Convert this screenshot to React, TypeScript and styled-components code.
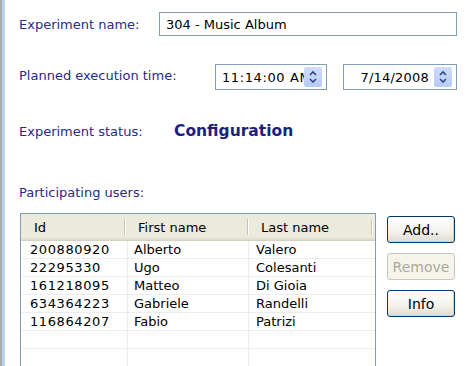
import styled, { createGlobalStyle } from 'styled-components';

const GlobalStyle = createGlobalStyle`
  html, body {
    margin: 0;
    padding: 0;
    background: #ffffff;
  }
  body {
    font-family: "DejaVu Sans", Verdana, sans-serif;
    font-size: 13px;
  }
`;

const Frame = styled.div`
  height: 366px;
  width: 474px;
  overflow: hidden;
  border-left: 2px solid #ababab;
  box-sizing: border-box;
`;

const Panel = styled.div`
  height: 100%;
  border-left: 3px solid #bcd1f0;
  padding-left: 14px;
  display: flex;
  flex-direction: column;
`;

const Row = styled.div<{ $top: number; $h: number }>`
  display: flex;
  align-items: center;
  margin-top: ${({ $top }) => $top}px;
  height: ${({ $h }) => $h}px;
`;

const Label = styled.div<{ $w?: number; $lift?: number }>`
  color: #262a8e;
  font-size: 13px;
  width: ${({ $w }) => ($w ? `${$w}px` : 'auto')};
  flex-shrink: 0;
  white-space: nowrap;
  margin-top: ${({ $lift }) => ($lift ? `-${$lift}px` : '0')};
`;

const Status = styled.div`
  color: #1d1f7e;
  font-size: 15.5px;
  font-weight: bold;
`;

const TextBox = styled.div<{ $w: number; $h: number }>`
  width: ${({ $w }) => $w}px;
  height: ${({ $h }) => $h}px;
  box-sizing: border-box;
  border: 1px solid #7f9db9;
  background: #fff;
  display: flex;
  align-items: center;
  padding: 0 4px 0 6px;
  color: #000;
  font-size: 13px;
  overflow: hidden;
  white-space: nowrap;
`;

const PickerText = styled.div<{ $right?: boolean }>`
  flex: 1;
  overflow: hidden;
  white-space: nowrap;
  letter-spacing: ${({ $right }) => ($right ? '0.2px' : '0.6px')};
  text-align: ${({ $right }) => ($right ? 'right' : 'left')};
  padding-right: ${({ $right }) => ($right ? '5px' : '0')};
`;

const Spin = styled.div`
  width: 18px;
  height: 20px;
  flex-shrink: 0;
  background: linear-gradient(#cfdcf8, #b7cbf5);
  border-radius: 2px;
  display: flex;
  align-items: center;
  justify-content: center;
`;

const Gap = styled.div<{ $w: number }>`
  width: ${({ $w }) => $w}px;
  flex-shrink: 0;
`;

const TableArea = styled.div`
  display: flex;
  margin-top: 13px;
  margin-left: 1px;
  gap: 11px;
`;

const Grid = styled.div`
  width: 356px;
  height: 160px;
  box-sizing: border-box;
  border: 1px solid #7f9db9;
  background: #fff;
  display: flex;
  flex-direction: column;
`;

const HeaderRow = styled.div`
  display: grid;
  grid-template-columns: 104px 123px 124px 1fr;
  height: 26px;
  background: #ebeadb;
  border-bottom: 1px solid #d6d2c2;
  box-shadow: inset 0 -2px 0 #e2dfd0;
  flex-shrink: 0;
`;

const HeadCell = styled.div<{ $sep?: boolean }>`
  display: flex;
  align-items: center;
  padding-left: 13px;
  color: #000;
  position: relative;
  &::after {
    content: '';
    display: ${({ $sep }) => ($sep ? 'block' : 'none')};
    position: absolute;
    right: 0;
    top: 5px;
    bottom: 5px;
    width: 1px;
    background: #c7c5b2;
    box-shadow: 1px 0 0 #fff;
  }
`;

const BodyRow = styled.div`
  display: grid;
  grid-template-columns: 107px 121px 1fr;
  height: 18px;
  border-bottom: 1px solid #ececec;
  box-sizing: border-box;
  flex-shrink: 0;
`;

const Cell = styled.div<{ $pad: number; $last?: boolean; $num?: boolean }>`
  display: flex;
  align-items: center;
  padding-left: ${({ $pad }) => $pad}px;
  border-right: ${({ $last }) => ($last ? 'none' : '1px solid #ececec')};
  color: #000;
  font-size: 13px;
  letter-spacing: ${({ $num }) => ($num ? '0.6px' : '0')};
  white-space: nowrap;
  overflow: hidden;
`;

const Buttons = styled.div`
  display: flex;
  flex-direction: column;
  gap: 10px;
  padding-top: 3px;
`;

const Button = styled.button<{ $disabled?: boolean }>`
  width: 68px;
  height: 27px;
  box-sizing: border-box;
  border-radius: 3px;
  font-family: "DejaVu Sans", Verdana, sans-serif;
  font-size: 14px;
  padding: 0;
  border: 1px solid ${({ $disabled }) => ($disabled ? '#cac8bb' : '#003c74')};
  color: ${({ $disabled }) => ($disabled ? '#aca899' : '#000')};
  background: ${({ $disabled }) =>
    $disabled ? '#f5f4ea' : 'linear-gradient(#ffffff 0%, #f3f2ec 60%, #dedbcf 100%)'};
  box-shadow: ${({ $disabled }) => ($disabled ? 'none' : 'inset -1px -1px 0 #d6d0c0')};
`;

const users = [
  { id: '200880920', first: 'Alberto', last: 'Valero' },
  { id: '22295330', first: 'Ugo', last: 'Colesanti' },
  { id: '161218095', first: 'Matteo', last: 'Di Gioia' },
  { id: '634364223', first: 'Gabriele', last: 'Randelli' },
  { id: '116864207', first: 'Fabio', last: 'Patrizi' },
  { id: '', first: '', last: '' },
  { id: '', first: '', last: '' },
];

const SpinIcon = () => (
  <svg width="10" height="14" viewBox="0 0 10 14">
    <path d="M2 5 L5 2 L8 5" fill="none" stroke="#2d4a8c" strokeWidth="1.6" />
    <path d="M2 9 L5 12 L8 9" fill="none" stroke="#2d4a8c" strokeWidth="1.6" />
  </svg>
);

export default function App() {
  return (
    <>
      <GlobalStyle />
      <Frame>
        <Panel>
          <Row $top={12} $h={24}>
            <Label $w={140}>Experiment name:</Label>
            <TextBox $w={298} $h={24}>304 - Music Album</TextBox>
          </Row>

          <Row $top={28} $h={26}>
            <Label $w={196} $lift={4}>Planned execution time:</Label>
            <TextBox $w={112} $h={26}>
              <PickerText>11:14:00 AM</PickerText>
              <Spin>
                <SpinIcon />
              </Spin>
            </TextBox>
            <Gap $w={16} />
            <TextBox $w={114} $h={26}>
              <PickerText $right>7/14/2008</PickerText>
              <Spin>
                <SpinIcon />
              </Spin>
            </TextBox>
          </Row>

          <Row $top={32} $h={20}>
            <Label $w={155}>Experiment status:</Label>
            <Status>Configuration</Status>
          </Row>

          <Row $top={45} $h={18}>
            <Label>Participating users:</Label>
          </Row>

          <TableArea>
            <Grid>
              <HeaderRow>
                <HeadCell $sep>Id</HeadCell>
                <HeadCell $sep>First name</HeadCell>
                <HeadCell $sep>Last name</HeadCell>
                <HeadCell />
              </HeaderRow>
              {users.map((u, i) => (
                <BodyRow key={i}>
                  <Cell $pad={9} $num>{u.id}</Cell>
                  <Cell $pad={6}>{u.first}</Cell>
                  <Cell $pad={7} $last>{u.last}</Cell>
                </BodyRow>
              ))}
            </Grid>
            <Buttons>
              <Button>Add..</Button>
              <Button $disabled>Remove</Button>
              <Button>Info</Button>
            </Buttons>
          </TableArea>
        </Panel>
      </Frame>
    </>
  );
}
